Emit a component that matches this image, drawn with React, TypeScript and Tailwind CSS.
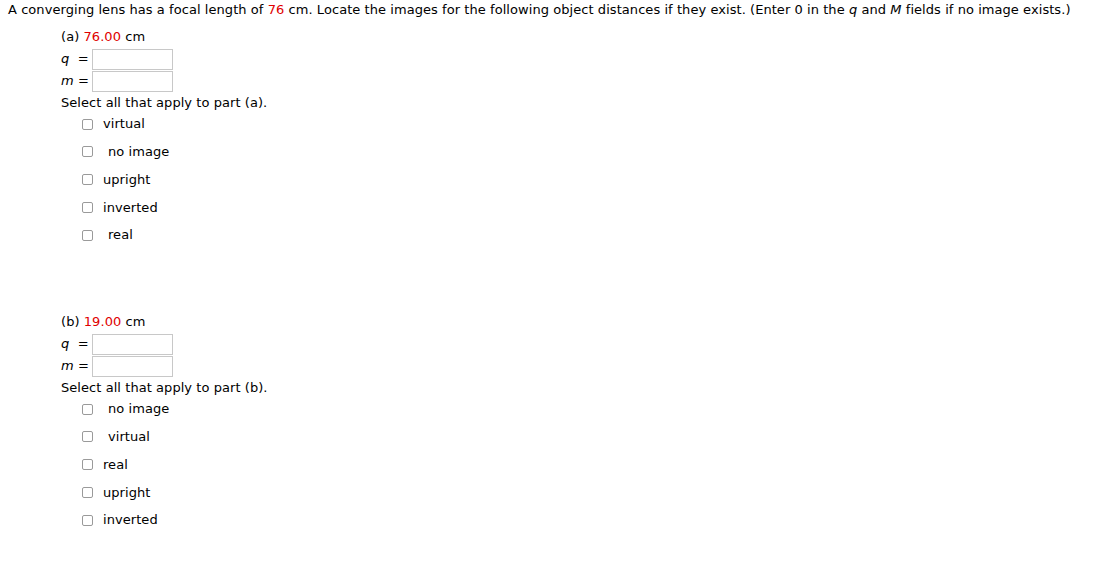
import React from "react";

type Part = {
  label: string;
  dist: string;
  options: { text: string; pad?: boolean }[];
};

const RED = "#e00000";

const parts: Part[] = [
  {
    label: "a",
    dist: "76.00",
    options: [
      { text: "virtual" },
      { text: "no image", pad: true },
      { text: "upright" },
      { text: "inverted" },
      { text: "real", pad: true },
    ],
  },
  {
    label: "b",
    dist: "19.00",
    options: [
      { text: "no image", pad: true },
      { text: "virtual", pad: true },
      { text: "real" },
      { text: "upright" },
      { text: "inverted" },
    ],
  },
];

function Field({ name }: { name: string }) {
  return (
    <div className="flex h-[22px] items-center">
      <div className="w-[31px] whitespace-pre">
        <i>{name}</i>
        {name === "q" ? "  =" : " ="}
      </div>
      <input
        type="text"
        className="h-[21px] w-[81px] border border-[#c8c8c8] bg-white outline-none"
      />
    </div>
  );
}

function PartBlock({ part }: { part: Part }) {
  return (
    <div className="ml-[53px]">
      <div className="flex h-[22px] items-center">
        ({part.label})&nbsp;<span style={{ color: RED }}>{part.dist}</span>&nbsp;cm
      </div>
      <Field name="q" />
      <Field name="m" />
      <div className="flex h-[22px] items-center">
        Select all that apply to part ({part.label}).
      </div>
      <div className="ml-[21px] flex flex-col gap-[7.75px]">
        {part.options.map((o) => (
          <label key={o.text} className="flex h-[20px] items-center">
            <span className="h-[11px] w-[11px] rounded-[2px] border border-[#9a9a9a] bg-white" />
            <span className={o.pad ? "ml-[15px]" : "ml-[10px]"}>{o.text}</span>
          </label>
        ))}
      </div>
    </div>
  );
}

export default function App() {
  return (
    <div
      className="min-h-[581px] bg-white pl-[8px] text-[13px] tracking-[0.06px] text-black"
      style={{ fontFamily: '"DejaVu Sans", Verdana, sans-serif' }}
    >
      <div className="flex h-[20px] items-center">
        <span>
          A converging lens has a focal length of{" "}
          <span style={{ color: RED }}>76</span> cm. Locate the images for the
          following object distances if they exist. (Enter 0 in the <i>q</i> and{" "}
          <i>M</i> fields if no image exists.)
        </span>
      </div>
      <div className="mt-[6px]">
        <PartBlock part={parts[0]} />
      </div>
      <div className="mt-[66px]">
        <PartBlock part={parts[1]} />
      </div>
    </div>
  );
}
